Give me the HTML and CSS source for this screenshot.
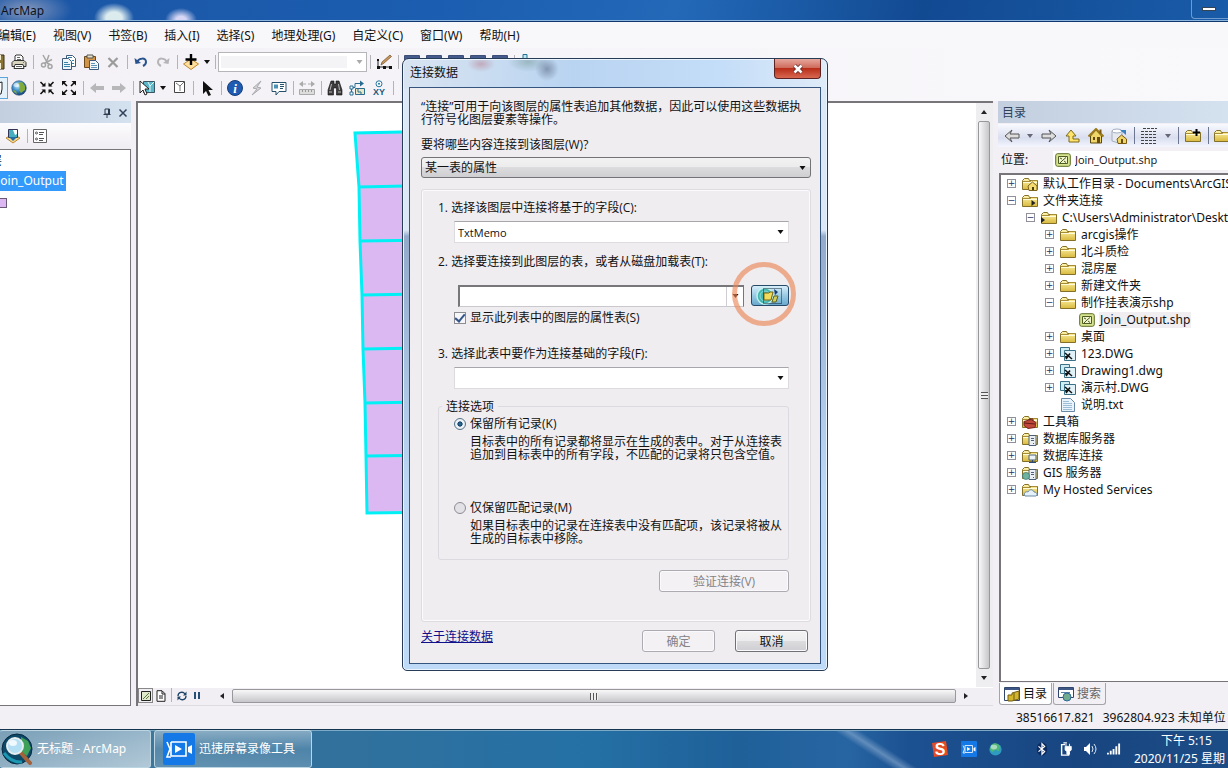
FILE: index.html
```html
<!DOCTYPE html>
<html lang="zh-CN">
<head>
<meta charset="utf-8">
<title>无标题 - ArcMap</title>
<link rel="stylesheet" href="styles.css">
</head>
<body>
<svg class="sprite" aria-hidden="true">
  <defs>
    <linearGradient id="gold" x1="0" y1="0" x2="0" y2="1"><stop offset="0" stop-color="#fff6b0"/><stop offset="1" stop-color="#d9b93c"/></linearGradient>
    <radialGradient id="sea" cx=".4" cy=".35" r=".7"><stop offset="0" stop-color="#c9ecff"/><stop offset=".5" stop-color="#3b8ac4"/><stop offset="1" stop-color="#123a6b"/></radialGradient>
  </defs>
  <symbol id="save" viewBox="0 0 16 16"><path d="M1 1h14v14H1z" fill="#8a7434" stroke="#3c3115"/><path d="M4 1h8v5H4zM4 9h8v6H4z" fill="#f3edd4"/></symbol>
  <symbol id="print" viewBox="0 0 16 16"><path d="M4 7V2l1-1h5l2 2v4" fill="#fff" stroke="#333"/><path d="M1 8.500l2-2h10l2 2v4H1z" fill="#d8d4c0" stroke="#333"/><path d="M4 10.500h8l1 4H3z" fill="#fff" stroke="#333"/><path d="M6 3.500h3M6 5.500h4M5 12.500h6" stroke="#666"/><path d="M12 8.500h1" stroke="#3a3"/></symbol>
  <symbol id="cut" viewBox="0 0 16 16"><g fill="none" stroke="#a5a5a5" stroke-width="1.500"><path d="M4 1l5 9M10 1L7 9"/><circle cx="4.500" cy="11" r="2"/><circle cx="11" cy="12.500" r="2"/><path d="M5 9.500l8-4M8 9l3 1.500"/></g></symbol>
  <symbol id="copy" viewBox="0 0 16 16"><path d="M5.500 1.500h6l3 3v8h-9z" fill="#fff" stroke="#3d5a7c"/><path d="M1.500 4.500h6l3 3v8h-9z" fill="#eef6fb" stroke="#3d5a7c"/><path d="M3 8.500h4M3 10.500h6M3 12.500h6M7 3.500h4M11 6.500h2M11 9.500h2" stroke="#3685a8"/></symbol>
  <symbol id="paste" viewBox="0 0 16 16"><path d="M1.500 2.500h11v11h-11z" fill="#d29446" stroke="#6d4a1b"/><path d="M4 1h6v3H4z" fill="#e8dfc6" stroke="#555"/><path d="M6.500 6.500h6l3 3v6h-9z" fill="#f4f8fb" stroke="#3d5a7c"/><path d="M8 9.500h4M8 11.500h6M8 13.500h6" stroke="#5d94b8"/></symbol>
  <symbol id="del" viewBox="0 0 16 16"><path d="M3.500 4l9 9M12.500 4l-9 9" stroke="#9b9b9b" stroke-width="2.200"/></symbol>
  <symbol id="undo" viewBox="0 0 16 16"><path d="M4 8c2-4 9-5 9 0 0 2-1 3-3 4" fill="none" stroke="#28538f" stroke-width="2"/><path d="M1.500 4l1 6 5.500-1z" fill="#28538f"/></symbol>
  <symbol id="redo" viewBox="0 0 16 16"><path d="M12 8c-2-4-9-5-9 0 0 2 1 3 3 4" fill="none" stroke="#b5b5b8" stroke-width="2"/><path d="M14.500 4l-1 6L8 9z" fill="#b5b5b8"/></symbol>
  <symbol id="add" viewBox="0 0 16 16"><path d="M8 5l7.500 5L8 15.500.5 10z" fill="#ffdf9b" stroke="#bd8730"/><path d="M8 0v11M2.500 5.500h11" stroke="#000" stroke-width="2.400"/></symbol>
  <symbol id="caret" viewBox="0 0 6 4"><path d="M0 0h6L3 4z" fill="currentColor"/></symbol>
  <symbol id="edit" viewBox="0 0 16 16"><path d="M2 6v7h12" stroke="#222" fill="none"/><path d="M1 5h2v2H1zM1 12h3v3H1zM7 12h3v3H7zM13 12h3v3h-3z" fill="#111"/><path d="M5 11l1-3 8-7 1.500 1.500-8 7z" fill="#c9975c" stroke="#6e4c25" stroke-width=".7"/></symbol>
  <symbol id="win" viewBox="0 0 16 16"><path d="M.5 1.500h15v13H.5z" fill="#eff5fa" stroke="#3d4e78"/><path d="M1 2h14v3H1z" fill="#465b8d"/></symbol>
  <symbol id="model" viewBox="0 0 16 16"><path d="M3 .5h4V6H3z" fill="#bfe6f2" stroke="#247391"/></symbol>
  <symbol id="hand" viewBox="0 0 16 16"><path d="M9 3l4-1v7l-1 5H5L2 8" fill="#fff" stroke="#222"/></symbol>
  <symbol id="globe" viewBox="0 0 16 16"><circle cx="8" cy="8" r="7.300" fill="url(#sea)" stroke="#37577e" stroke-width=".6"/><path d="M7 3l4-1 3 4v4l-4 3-2-3 1-3zM2 10l3 1 1 3-3-2z" fill="#82ab3d"/><ellipse cx="5.500" cy="5" rx="3" ry="2" fill="#fff" opacity=".55"/></symbol>
  <symbol id="earth" viewBox="0 0 16 16"><circle cx="8" cy="8" r="7.500" fill="#2f9bc0"/><path d="M3 2q6-4 11 2l-2 6-4-2-4 3-3-3z" fill="#4fb878"/><ellipse cx="6" cy="5" rx="4" ry="3" fill="#fff" opacity=".5"/></symbol>
  <symbol id="zin" viewBox="0 0 16 16"><path d="M1.500 2l4 4M14.500 2l-4 4M1.500 14l4-4M14.500 14l-4-4" stroke="#111" stroke-width="1.600"/><path d="M6.500 2.500v4h-4zM9.500 2.500v4h4zM6.500 13.500v-4h-4zM9.500 13.500v-4h4z" fill="#111"/></symbol>
  <symbol id="zout" viewBox="0 0 16 16"><path d="M2 2l4 4M14 2l-4 4M2 14l4-4M14 14l-4-4" stroke="#111" stroke-width="1.600"/><path d="M1 1h4.500L1 5.500zM15 1h-4.500L15 5.500zM1 15h4.500L1 10.500zM15 15h-4.500l4.500-4.500z" fill="#111"/></symbol>
  <symbol id="left" viewBox="0 0 16 16"><path d="M1 8l6-5v3h8v4H7v3z" fill="#b7b7ba"/></symbol>
  <symbol id="right" viewBox="0 0 16 16"><path d="M15 8L9 3v3H1v4h8v3z" fill="#b7b7ba"/></symbol>
  <symbol id="select" viewBox="0 0 16 16"><path d="M4.500 1.500h11v11h-11z" fill="#59b8c9" stroke="#3b5663"/><path d="M9 2l2 4 4-4M11 6v6" stroke="#e5f8fa" fill="none"/><path d="M1 1v12l3-3 2 5 2-1-2-5h4z" fill="#fff" stroke="#222"/></symbol>
  <symbol id="desel" viewBox="0 0 16 16"><path d="M3.500 1.500h10v11h-10z" fill="#fff" stroke="#444"/><path d="M5 3l4 3 4-4M9 6v5" stroke="#777" fill="none"/></symbol>
  <symbol id="pointer" viewBox="0 0 16 16"><path d="M4 1v13l3-3 2.500 5 2.500-1-2.500-5H14z" fill="#111"/></symbol>
  <symbol id="bolt" viewBox="0 0 16 16"><path d="M12 1L4 8l4 1-5 6 9-7-4-1z" fill="#d4d4d6" stroke="#a9a9ac"/></symbol>
  <symbol id="popup" viewBox="0 0 16 16"><path d="M1 2.500h14v9H8L5 15v-3.500H1z" fill="#fff" stroke="#24516c"/><path d="M3 4.500h4v4H3z" fill="#4b91b8"/><path d="M9 4.500h4M9 6.500h4M9 8.500h3" stroke="#24516c"/></symbol>
  <symbol id="measure" viewBox="0 0 16 16"><path d="M2 4h12" stroke="#aaa" stroke-dasharray="5 2"/><path d="M4 1v6L0 4zM12 1v6l4-3z" fill="#aaa"/><path d="M.5 9.500h15v5H.5z" fill="#ddd" stroke="#aaa"/><path d="M3.500 10v2M6.500 10v2M9.500 10v2M12.500 10v2" stroke="#999"/></symbol>
  <symbol id="find" viewBox="0 0 16 16"><path d="M4 1h3v3h2V1h3l3 9v5H9.500V8h-3v7H1v-5z" fill="#3d3b3b" stroke="#111" stroke-width=".6"/><path d="M4.500 4L3 10M11.500 4l1 6M2 12h3M11 12h3" stroke="#bbb"/></symbol>
  <symbol id="route" viewBox="0 0 16 16"><path d="M2.500 13V7.500H6V3.500h6" stroke="#286d91" fill="none"/><path d="M11 .5l4 3-4 3z" fill="#286d91"/><path d="M1 6h3v3H1zM1 12h3v3H1z" fill="#fff" stroke="#286d91"/><path d="M6.500 8.500h9v6h-9z" fill="#e8e6c4" stroke="#286d91"/><path d="M9 9v3h3v2" stroke="#286d91" fill="none"/></symbol>
  <symbol id="pin" viewBox="0 0 10 10"><path d="M3 1h4.500v5H3zM1.500 6.500h7M5 7v3M6.500 1v5" stroke="#2b3a4f" fill="none"/></symbol>
  <symbol id="x" viewBox="0 0 10 10"><path d="M1.500 1.500l7 7M8.500 1.500l-7 7" stroke="currentColor" stroke-width="1.500"/></symbol>
  <symbol id="bigx" viewBox="0 0 12 10"><path d="M2.500 1.500l7 7M9.500 1.500l-7 7" stroke="#5a2020" stroke-width="4"/><path d="M2.500 1.500l7 7M9.500 1.500l-7 7" stroke="#fff" stroke-width="2.600"/></symbol>
  <symbol id="source" viewBox="0 0 16 16"><path d="M1 10l7-4 7 4-7 5z" fill="#f9d98b" stroke="#bd8730"/><path d="M3.500 1.500h9v8h-9z" fill="#46aebd" stroke="#335"/><path d="M8 2h4v4l-2 1z" fill="#fff"/><path d="M8 13L4 9h8z" fill="#246ea5"/></symbol>
  <symbol id="listopt" viewBox="0 0 14 14"><path d="M.5.5h13v13H.5z" fill="#fff" stroke="#666"/><g fill="none" stroke="#555"><circle cx="3.500" cy="4" r="1"/><circle cx="3.500" cy="10" r="1"/><path d="M6 3.500h5M6 5.500h4M6 9.500h5M6 11.500h4"/></g></symbol>
  <symbol id="nav-l" viewBox="0 0 16 16"><path d="M1 8l7-6-2 4h9v4H6l2 4z" fill="#ddd" stroke="#555"/></symbol>
  <symbol id="nav-r" viewBox="0 0 16 16"><path d="M15 8L8 2l2 4H1v4h9l-2 4z" fill="#ddd" stroke="#555"/></symbol>
  <symbol id="up" viewBox="0 0 16 16"><path d="M6 2l5 6H8v3h6v3H4V8H1z" fill="#ffe36a" stroke="#7b681d"/></symbol>
  <symbol id="home" viewBox="0 0 16 16"><path d="M2.500 8v7h11V8L8 2z" fill="#f0d567" stroke="#5b4912"/><path d="M.5 8.500L8 1l7.500 7.500" fill="none" stroke="#9c7b1c" stroke-width="2"/><path d="M5 9h2v3H5zM9 9h3v6H9z" fill="#664b16"/><path d="M11.500 1.500h2v4h-2z" fill="#7b5b12"/></symbol>
  <symbol id="dbhome" viewBox="0 0 16 16"><path d="M1 3v10q5 3 10 0V3z" fill="#e6e9ee" stroke="#a3afc0"/><ellipse cx="6" cy="3" rx="5" ry="2" fill="#fff" stroke="#a3afc0"/><path d="M9 2h6v5z" fill="#3b82c0"/><path d="M6 11l4.500-4 5 4v4.500H7z" fill="#f0d567" stroke="#7b5b12"/><path d="M10 11h2v4h-2z" fill="#664b16"/></symbol>
  <symbol id="grid" viewBox="0 0 16 16"><path d="M2 .5h14M0 3.500h16M0 6.500h16M0 9.500h16M0 12.500h16M0 15.500h16" stroke="#444" stroke-dasharray="3 1"/></symbol>
  <symbol id="folder" viewBox="0 0 16 14"><path d="M.5 12.500v-9l2-2h4l1 2h8v9z" fill="url(#gold)" stroke="#85702a"/><path d="M1 5.500h14" stroke="#fffbd9"/><path d="M.5 4.500h8l1-1h6" stroke="#a68d35" fill="none"/></symbol>
  <symbol id="f-home" viewBox="0 0 16 14"><use href="#folder"/><path d="M6 9l4.500-4L15 9v4.500H7z" fill="#f5dc72" stroke="#7a6420"/><path d="M10 10h2v3h-2z" fill="#513f0b"/></symbol>
  <symbol id="f-go" viewBox="0 0 16 14"><use href="#folder"/><path d="M9.500 6l4 3-4 3z" fill="#222"/></symbol>
  <symbol id="f-in" viewBox="0 0 16 14"><use href="#folder"/><path d="M0 6l4 3-4 3z" fill="#222"/></symbol>
  <symbol id="f-plus" viewBox="0 0 16 14"><use href="#folder"/><path d="M11.500 0v7M8 3.500h7" stroke="#000" stroke-width="2"/></symbol>
  <symbol id="f-tool" viewBox="0 0 16 14"><use href="#folder"/><path d="M2 6.500l7-2 5 3-1 5-7 1-4-3z" fill="#c0473a" stroke="#7c261e"/><path d="M7 5V4h4v2M2 8l11 1" stroke="#641d17" fill="none"/></symbol>
  <symbol id="f-db" viewBox="0 0 16 14"><use href="#folder"/><path d="M7 3.500h7v10H7z" fill="#e9eff4" stroke="#4c6176"/><path d="M9 6.500h3M9 8.500h3M11 11.500h1" stroke="#4c6176"/></symbol>
  <symbol id="f-conn" viewBox="0 0 16 14"><use href="#folder"/><path d="M7 6h7v5H7z" fill="#ecf4fa" stroke="#4c6176"/><path d="M10.500 11v2M7 13.500h7" stroke="#2d4c72"/></symbol>
  <symbol id="f-gis" viewBox="0 0 16 14"><use href="#f-db"/><circle cx="4" cy="10" r="3.500" fill="#6fb39d" stroke="#3e7480" stroke-width=".7"/></symbol>
  <symbol id="f-cloud" viewBox="0 0 16 14"><use href="#folder"/><path d="M3 13c-2-3 1-5 3-4 1-3 5-3 6 0 3 0 4 3 2 4z" fill="#e6f2fb" stroke="#6b8ba5"/></symbol>
  <symbol id="shp" viewBox="0 0 16 14"><rect x=".7" y=".7" width="14.600" height="12.600" rx="2" fill="#d7e38f" stroke="#5a6d25"/><path d="M3.500 3.500h9v7h-9z" fill="#eff4cd" stroke="#4c5c22"/><path d="M5 5l2 1M11 4.500L8 7l-3 3M9 8l2 1.500" stroke="#4c5c22" fill="none"/></symbol>
  <symbol id="dwg" viewBox="0 0 16 14"><path d="M.5.500h9v9h-9z" fill="#d0ecf3" stroke="#3a7186"/><path d="M4.500 3.500h11v10h-11z" fill="#e0f2f7" stroke="#3a7186"/><path d="M5 6l7 6M10 6.500L6 12M5 10l4-1" stroke="#111" stroke-width="1.500"/></symbol>
  <symbol id="txt" viewBox="0 0 16 14"><path d="M1.500.5h9l4 4v9h-13z" fill="#e9f3fb" stroke="#6789a5"/><path d="M3 3.500h6M3 5.500h9M3 7.500h9M3 9.500h9M3 11.500h9" stroke="#9dbdd6"/></symbol>
  <symbol id="tab-cat" viewBox="0 0 16 16"><path d="M.5 1.500h15v13H.5z" fill="#fff" stroke="#31466d"/><path d="M1 2h14v2H1z" fill="#3e5685"/><path d="M4 9h4V7l7-2v8l-7 2H4z" fill="#d4b62c" stroke="#715e13"/><path d="M10 7v7" stroke="#715e13"/></symbol>
  <symbol id="tab-find" viewBox="0 0 16 16"><path d="M.5 1.500h15v10H.5z" fill="#fff" stroke="#31466d"/><path d="M1 2h14v2H1z" fill="#3e5685"/><path d="M3 6.500h9" stroke="#5981a8"/><circle cx="9" cy="11" r="4" fill="#6fab8f" stroke="#31699a"/></symbol>
  <symbol id="page" viewBox="0 0 10 12"><path d="M1 .7h5l3 3v7.600H1zM6 1v3h3M3 6h4M3 8h4" fill="#fff" stroke="#222"/></symbol>
  <symbol id="dataview" viewBox="0 0 10 10"><path d="M.5.500h9v9h-9z" fill="#dfe9cc" stroke="#222"/><path d="M2 8l6-6M5 8l3-3" stroke="#5b7a42"/></symbol>
  <symbol id="refresh" viewBox="0 0 10 10"><path d="M1 5c0-4 5-5 7-2M9 5c0 4-5 5-7 2" fill="none" stroke="#1c4468" stroke-width="1.300"/><path d="M9.500.5v4H6zM.5 9.500v-4H4z" fill="#1c4468"/></symbol>
  <symbol id="arcmap" viewBox="0 0 32 32"><circle cx="16" cy="16" r="15" fill="#0c4868" stroke="#07283f"/><path d="M20 4l7 4 3 7-4 8-6-4z" fill="#3fa05a"/><path d="M3 20q8 10 18 9" stroke="#1c98b3" stroke-width="3" fill="none"/><path d="M19 19l10 11" stroke="#a2623a" stroke-width="4" stroke-linecap="round"/><circle cx="14" cy="13" r="8" fill="#b3dff4" stroke="#e7edf0" stroke-width="2"/><ellipse cx="12" cy="10" rx="4" ry="3" fill="#fff" opacity=".8"/></symbol>
  <symbol id="recorder" viewBox="0 0 32 32"><rect width="32" height="32" rx="2" fill="#1479e6"/><path d="M8 9h15v14H8M4 9l3 7-3 8h4M8 9v14" fill="none" stroke="#fff" stroke-width="1.600"/><path d="M12 12l7 4-7 4z" fill="#fff"/><path d="M25 14l4-2v9l-4-2z" fill="#fff"/></symbol>
  <symbol id="bt" viewBox="0 0 14 16"><ellipse cx="7" cy="8" rx="6" ry="7.500" fill="#0c2b60"/><path d="M3 5l7 6-3 3V2l3 3-7 6" stroke="#fff" fill="none" stroke-width="1.400"/></symbol>
  <symbol id="power" viewBox="0 0 14 16"><path d="M6 3H2v12h8v-3M4 1h4" fill="none" stroke="#fff" stroke-width="1.600"/><path d="M6 5h7v4l-2 2v3H8v-3L6 9zM7 2v3M11 2v3" fill="#fff" stroke="#fff"/></symbol>
  <symbol id="sound" viewBox="0 0 14 14"><path d="M1 5h2l4-4v12L3 9H1z" fill="#fff"/><path d="M9 4q2 3 0 6M11 2q4 5 0 10" stroke="#dce8f4" fill="none"/></symbol>
  <symbol id="signal" viewBox="0 0 15 12"><path d="M0 10h2v2H0zM3 8h2v4H3zM6 6h2v6H6zM9 3h2v9H9zM12 0h2v12h-2z" fill="#fff"/></symbol>
  <symbol id="browse" viewBox="0 0 28 18"><circle cx="9" cy="9" r="8" fill="#45b5b1" stroke="#bff2ec" stroke-width="1.500"/><circle cx="9" cy="9" r="5" fill="none" stroke="#8fdcd2"/><path d="M8 6h5l1-1h3l-2 8H8z" fill="#f2dc5b" stroke="#766314"/><path d="M18 9h4l-2 6h-4z" fill="#d5cd5b" stroke="#5b6320"/><path d="M18 2l4 3-3 3z" fill="#153d6d"/><path d="M7.500 1.500h18v15h-18z" fill="none" stroke="#123" stroke-dasharray="1 1"/></symbol>
</svg>

<header class="titlebar"><h1>ArcMap</h1><button class="minimize" aria-label="最小化"><span></span></button></header>
<nav class="menubar">
  <button>编辑(E)</button><button>视图(V)</button><button>书签(B)</button><button>插入(I)</button><button>选择(S)</button><button>地理处理(G)</button><button>自定义(C)</button><button>窗口(W)</button><button>帮助(H)</button>
</nav>
<div class="toolbar">
  <button aria-label="保存"><svg><use href="#save"/></svg></button><button aria-label="打印"><svg><use href="#print"/></svg></button><i></i>
  <button aria-label="剪切"><svg><use href="#cut"/></svg></button><button aria-label="复制"><svg><use href="#copy"/></svg></button><button aria-label="粘贴"><svg><use href="#paste"/></svg></button><button aria-label="删除"><svg><use href="#del"/></svg></button><i></i>
  <button aria-label="撤消"><svg><use href="#undo"/></svg></button><button aria-label="恢复"><svg><use href="#redo"/></svg></button><i></i>
  <button aria-label="添加数据"><svg><use href="#add"/></svg></button><button class="drop" aria-label="更多数据"><svg><use href="#caret"/></svg></button><i></i>
  <span class="scale"><select aria-label="比例尺" disabled><option></option></select><svg><use href="#caret"/></svg></span><i></i>
  <button aria-label="编辑器"><svg><use href="#edit"/></svg></button><i></i>
  <button aria-label="内容列表"><svg><use href="#win"/></svg></button><button aria-label="目录"><svg><use href="#win"/></svg></button><button aria-label="搜索"><svg><use href="#win"/></svg></button><button aria-label="工具箱"><svg><use href="#win"/></svg></button><button aria-label="Python"><svg><use href="#win"/></svg></button><i></i><button aria-label="模型"><svg><use href="#model"/></svg></button>
</div>
<div class="toolbar">
  <button class="active" aria-label="平移"><svg><use href="#hand"/></svg></button><button aria-label="全图"><svg><use href="#globe"/></svg></button><i></i>
  <button aria-label="固定放大"><svg><use href="#zin"/></svg></button><button aria-label="固定缩小"><svg><use href="#zout"/></svg></button><i></i>
  <button aria-label="后退"><svg><use href="#left"/></svg></button><button aria-label="前进"><svg><use href="#right"/></svg></button><i></i>
  <button aria-label="选择要素"><svg><use href="#select"/></svg></button><button class="drop" aria-label="选择方式"><svg><use href="#caret"/></svg></button><button aria-label="清除选择"><svg><use href="#desel"/></svg></button><i></i>
  <button aria-label="选择元素"><svg><use href="#pointer"/></svg></button><i></i>
  <button aria-label="识别"><svg viewBox="0 0 16 16"><circle cx="8" cy="8" r="7.500" fill="#1e5cb3" stroke="#173d79"/><text x="8" y="13" text-anchor="middle" class="svg-info">i</text></svg></button><button aria-label="超链接"><svg><use href="#bolt"/></svg></button><button aria-label="弹出窗口"><svg><use href="#popup"/></svg></button><i></i>
  <button aria-label="测量"><svg><use href="#measure"/></svg></button><i></i>
  <button aria-label="查找"><svg><use href="#find"/></svg></button><button aria-label="查找路径"><svg><use href="#route"/></svg></button><button aria-label="转到 XY"><svg viewBox="0 0 16 16"><circle cx="8" cy="3.800" r="3" fill="#fff" stroke="#24759e"/><circle cx="8" cy="3.800" r="1" fill="#24759e"/><text x="8" y="15" text-anchor="middle" class="svg-xy">XY</text></svg></button><i></i><button aria-label="查看器"><svg><use href="#desel"/></svg></button>
</div>

<main class="workspace">
  <aside class="contents">
    <div class="panel-head end"><button aria-label="固定"><svg><use href="#pin"/></svg></button><button aria-label="关闭"><svg><use href="#x"/></svg></button></div>
    <div class="contents-tools"><button aria-label="按源列出"><svg><use href="#source"/></svg></button><i></i><button aria-label="选项"><svg class="small"><use href="#listopt"/></svg></button></div>
    <div class="layers"><p><span>图层</span></p><p><span class="picked">Join_Output</span></p><p><span class="swatch"></span></p></div>
  </aside>
  <section class="mapframe">
    <div class="maprow">
      <div class="map"><svg viewBox="0 0 460 420" width="460" height="420"><path d="M218 30L221 84 222 138 224 192 225 246 227 300 228 353 229 410 460 407V25z" fill="#dcb8f2"/><path d="M460 25L217 30 221 84 222 138 224 192 225 246 227 300 228 353 229 410 460 407M221 84l239-5M222 138l238-3M224 192l236-4M225 246l235-4M227 300l233-4M228 353l232-3" fill="none" stroke="#00f0f5" stroke-width="3"/></svg></div>
      <div class="vscroll"><button aria-label="向上"><span class="tri up"></span></button><div class="thumb"><span></span></div><button aria-label="向下"><span class="tri down"></span></button></div>
    </div>
    <div class="mapfoot">
      <button class="on" aria-label="数据视图"><svg><use href="#dataview"/></svg></button><button aria-label="布局视图"><svg><use href="#page"/></svg></button><i></i><button aria-label="刷新"><svg><use href="#refresh"/></svg></button><button aria-label="暂停"><span class="pause"></span></button>
      <div class="hscroll"><button aria-label="向左"><span class="tri lt"></span></button><div class="thumb"><span></span></div><button aria-label="向右"><span class="tri rt"></span></button></div>
    </div>
  </section>
  <aside class="catalog">
    <div class="panel-head"><h2>目录</h2></div>
    <div class="cat-tools">
      <button aria-label="后退"><svg><use href="#nav-l"/></svg></button><button class="drop" aria-label="历史"><svg><use href="#caret"/></svg></button><button class="wide" aria-label="前进"><svg><use href="#nav-r"/></svg></button><button class="wide" aria-label="向上一级"><svg><use href="#up"/></svg></button><button aria-label="主目录"><svg><use href="#home"/></svg></button><button class="wide" aria-label="默认地理数据库"><svg><use href="#dbhome"/></svg></button><i></i><button class="wide" aria-label="视图"><svg><use href="#grid"/></svg></button><button class="drop" aria-label="视图选项"><svg><use href="#caret"/></svg></button><i></i><button class="wide" aria-label="连接文件夹"><svg><use href="#f-plus"/></svg></button><i></i><button aria-label="树"><svg><use href="#folder"/></svg></button>
    </div>
    <div class="location"><label for="loc">位置:</label><div><svg><use href="#shp"/></svg><input id="loc" value="Join_Output.shp"></div></div>
    <ul class="tree">
      <li><button>+</button><svg><use href="#f-home"/></svg><span>默认工作目录 - Documents\ArcGIS</span></li>
      <li><button>−</button><svg><use href="#f-go"/></svg><span>文件夹连接</span></li>
      <li class="l1"><button>−</button><svg><use href="#f-in"/></svg><span>C:\Users\Administrator\Desktop</span></li>
      <li class="l2"><button>+</button><svg><use href="#folder"/></svg><span>arcgis操作</span></li>
      <li class="l2"><button>+</button><svg><use href="#folder"/></svg><span>北斗质检</span></li>
      <li class="l2"><button>+</button><svg><use href="#folder"/></svg><span>混房屋</span></li>
      <li class="l2"><button>+</button><svg><use href="#folder"/></svg><span>新建文件夹</span></li>
      <li class="l2"><button>−</button><svg><use href="#folder"/></svg><span>制作挂表演示shp</span></li>
      <li class="l3"><svg><use href="#shp"/></svg><span class="current">Join_Output.shp</span></li>
      <li class="l2"><button>+</button><svg><use href="#folder"/></svg><span>桌面</span></li>
      <li class="l2"><button>+</button><svg><use href="#dwg"/></svg><span>123.DWG</span></li>
      <li class="l2"><button>+</button><svg><use href="#dwg"/></svg><span>Drawing1.dwg</span></li>
      <li class="l2"><button>+</button><svg><use href="#dwg"/></svg><span>演示村.DWG</span></li>
      <li class="l2 leaf"><svg><use href="#txt"/></svg><span>说明.txt</span></li>
      <li><button>+</button><svg><use href="#f-tool"/></svg><span>工具箱</span></li>
      <li><button>+</button><svg><use href="#f-db"/></svg><span>数据库服务器</span></li>
      <li><button>+</button><svg><use href="#f-conn"/></svg><span>数据库连接</span></li>
      <li><button>+</button><svg><use href="#f-gis"/></svg><span>GIS 服务器</span></li>
      <li><button>+</button><svg><use href="#f-cloud"/></svg><span>My Hosted Services</span></li>
    </ul>
    <div class="tabs"><button class="sel"><svg><use href="#tab-cat"/></svg>目录</button><button><svg><use href="#tab-find"/></svg>搜索</button></div>
  </aside>
</main>
<footer class="status"><p><span>38516617.821</span><span>3962804.923 未知单位</span></p></footer>
<div class="taskbar">
  <button class="task first"><svg><use href="#arcmap"/></svg>无标题 - ArcMap</button>
  <button class="task second"><svg><use href="#recorder"/></svg>迅捷屏幕录像工具</button>
  <div class="tray">
    <svg class="t18" viewBox="0 0 18 18"><path d="M1 3l14-2 2 14-14 2z" fill="#e54b25"/><text x="9" y="15" text-anchor="middle" class="svg-s">S</text></svg><svg class="t16"><use href="#recorder"/></svg><svg class="t12"><use href="#earth"/></svg>
    <svg class="t14 gap"><use href="#bt"/></svg><svg class="t14"><use href="#power"/></svg><svg class="t14"><use href="#sound"/></svg><svg class="t14"><use href="#signal"/></svg>
  </div>
  <time class="clock"><span>下午 5:15</span><span>2020/11/25 星期</span></time>
</div>

<section class="dialog" role="dialog" aria-labelledby="dlg">
  <header><h2 id="dlg">连接数据</h2><button class="close" aria-label="关闭"><svg><use href="#bigx"/></svg></button></header>
  <form class="client">
    <p class="intro">“连接”可用于向该图层的属性表追加其他数据，因此可以使用这些数据执行符号化图层要素等操作。</p>
    <label class="kind-label" for="kind">要将哪些内容连接到该图层(W)?</label>
    <span class="combo gray"><select id="kind"><option>某一表的属性</option></select><svg><use href="#caret"/></svg></span>
    <div class="group">
      <label for="f1">1. 选择该图层中连接将基于的字段(C):</label>
      <span class="combo"><select id="f1"><option>TxtMemo</option></select><svg><use href="#caret"/></svg></span>
      <label class="l-two" for="f2">2. 选择要连接到此图层的表，或者从磁盘加载表(T):</label>
      <div class="pick"><span class="combo sunk"><select id="f2"><option></option></select><svg><use href="#caret"/></svg></span><button type="button" class="browse" aria-label="浏览"><svg><use href="#browse"/></svg><span class="ring"></span></button></div>
      <div class="opt check"><input type="checkbox" id="show" checked><label for="show">显示此列表中的图层的属性表(S)</label></div>
      <label class="l-three" for="f3">3. 选择此表中要作为连接基础的字段(F):</label>
      <span class="combo"><select id="f3"><option></option></select><svg><use href="#caret"/></svg></span>
      <fieldset>
        <legend>连接选项</legend>
        <div class="opt"><input type="radio" name="keep" id="all" checked><label for="all">保留所有记录(K)</label></div>
        <p>目标表中的所有记录都将显示在生成的表中。对于从连接表追加到目标表中的所有字段，不匹配的记录将只包含空值。</p>
        <div class="opt later"><input type="radio" name="keep" id="match"><label for="match">仅保留匹配记录(M)</label></div>
        <p>如果目标表中的记录在连接表中没有匹配项，该记录将被从生成的目标表中移除。</p>
      </fieldset>
      <button type="button" class="btn verify" disabled>验证连接(V)</button>
    </div>
    <div class="actions"><a href="#about">关于连接数据</a><button type="button" class="btn" disabled>确定</button><button type="button" class="btn">取消</button></div>
  </form>
</section>
</body>
</html>
```
FILE: styles.css
```css
* { box-sizing: border-box; }
body { margin: 0; height: 100vh; min-height: 700px; display: flex; flex-direction: column; overflow: hidden; position: relative; background: #f2f0f4; color: #111; font: 12px/16px "Noto Sans", "Noto Sans CJK SC", sans-serif; }
button, input, select { font: inherit; color: inherit; }
button { border: 0; padding: 0; background: none; display: flex; align-items: center; justify-content: center; }
h1, h2, p, ul { margin: 0; padding: 0; font-size: 12px; font-weight: 400; }
svg { flex: none; width: 16px; height: 16px; }
.sprite { position: absolute; width: 0; height: 0; }
.svg-info { font: bold italic 13px "Liberation Serif", serif; fill: #fff; }
.svg-xy { font: bold 9px "Liberation Sans", sans-serif; fill: #1b5a80; }
.svg-s { font: bold 16px "Liberation Sans", sans-serif; fill: #fff; }

.titlebar { flex: none; height: 22px; display: flex; justify-content: space-between; border-bottom: 1px solid #10386f; box-shadow: inset 0 -1px #8db6df; background: radial-gradient(ellipse 20px 15px at 114px 18px, #dcebee 40%, transparent), radial-gradient(ellipse 16px 12px at 181px 20px, #d7d7f5 30%, transparent), radial-gradient(ellipse 46px 20px at 26px 10px, #8497bd, transparent), linear-gradient(100deg, #1c56a5, #1b5db0 35%, #2369b8 55%, #124a92 75%, #195ba8); }
.titlebar h1 { padding: 3px 1px; color: #0a1220; }
.minimize { width: 40px; height: 19px; margin-right: -3px; border: 1px solid #6d9bd0; border-top: 0; border-radius: 0 0 0 4px; justify-content: flex-start; padding-left: 10px; }
.minimize span { width: 12px; height: 4px; background: #fff; border: 1px solid #345; box-sizing: content-box; height: 2px; }
.menubar { flex: none; height: 26px; padding-top: 1px; display: flex; gap: 17px; align-items: center; margin-left: -2px; background: #f8f7fa; }
.menubar button { white-space: nowrap; }
.toolbar { flex: none; height: 27px; display: flex; align-items: center; background: linear-gradient(90deg, #f3f1f5, #f9f8fb); }
.toolbar > :first-child { margin-left: -14px; }
.toolbar + .toolbar { height: 26px; }
.toolbar button { flex: none; width: 22px; height: 22px; }
.toolbar .active { border: 1px solid #58a6da; background: #e4f1fa; }
.toolbar .drop { width: 10px; }
.drop svg { width: 6px; height: 4px; }
i { flex: none; width: 6px; height: 14px; background: linear-gradient(#b4b3b8, #b4b3b8) center / 1px 100% no-repeat; }
.scale { flex: none; width: 149px; height: 20px; display: flex; align-items: center; border: 1px solid #b6b6ba; background: #fff; padding: 2px; }
.scale select { appearance: none; border: 0; width: 126px; height: 12px; background: #f0eef1; }
.scale svg { width: 7px; height: 4px; margin-left: 9px; color: #aaa; }

.workspace { flex: 1; min-height: 0; display: flex; gap: 5px; }
.contents { flex: none; width: 131px; display: flex; flex-direction: column; }
.panel-head { flex: none; height: 22px; display: flex; align-items: center; padding: 1px 4px 0; background: linear-gradient(90deg, #c3cfdf, #d4e1ef); color: #30405a; }
.end { justify-content: flex-end; gap: 6px; padding-right: 3px; }
.end svg { width: 10px; height: 10px; }
.contents-tools { flex: none; height: 26px; display: flex; align-items: center; gap: 3px; padding-left: 5px; background: linear-gradient(#fcfbfd, #efedf1); }
.contents-tools .small { width: 14px; height: 14px; }
.layers { flex: 1; border: 1px solid #77757a; border-left: 0; background: #fff; padding-top: 1px; overflow: hidden; white-space: nowrap; }
.layers p { height: 20px; line-height: 20px; }
.layers p:first-child { margin-left: -22px; }
.layers p:nth-child(2) { margin-left: -6px; }
.picked { display: inline-block; padding: 0 2px 0 3px; background: #3399fa; color: #fff; }
.swatch { display: block; width: 7px; height: 10px; margin-top: 7px; }
.layers .swatch { background: #dcb8f2; border: 1px solid #6c5976; border-left: 0; }

.mapframe { flex: 1; min-width: 0; display: flex; flex-direction: column; border-left: 2px solid #77757a; border-top: 2px solid #77757a; }
.maprow { flex: 1; min-height: 0; display: flex; }
.map { flex: 1; overflow: hidden; background: #fff; }
.map svg { width: 460px; height: 420px; display: block; }
.vscroll { width: 17px; padding-right: 1px; display: flex; flex-direction: column; background: #eeedf0; }
.vscroll button { height: 18px; width: 16px; }
.thumb { flex: 1; display: flex; align-items: center; justify-content: center; border: 1px solid #98979c; border-radius: 2px; }
.vscroll .thumb { background: linear-gradient(90deg, #f8f8f9, #c7c7cb); margin: 0 2px; }
.vscroll .thumb span { width: 7px; height: 7px; background: repeating-linear-gradient(#555 0 1px, #eee 1px 3px); }
.tri { width: 0; height: 0; border: 3px solid transparent; }
.tri.up { border-top: 0; border-bottom: 4px solid #222; }
.tri.down { border-bottom: 0; border-top: 4px solid #222; }
.tri.lt { border-left: 0; border-right: 4px solid #222; }
.tri.rt { border-right: 0; border-left: 4px solid #222; }
.mapfoot { flex: none; height: 19px; display: flex; align-items: flex-start; border-bottom: 1px solid #dddce0; border-top: 1px solid #fff; padding-right: 17px; background: #f1eff3; }
.mapfoot > button { width: 15px; height: 15px; }
.mapfoot > button:not(.on) svg { height: 12px; width: 10px; }
.mapfoot svg { width: 10px; height: 10px; }
.mapfoot .on { border: 1px solid #888; }
.mapfoot .pause { width: 6px; height: 7px; border: solid #245077; border-width: 0 2px; }
.hscroll { flex: 1; height: 16px; display: flex; margin-left: 8px; }
.hscroll button { width: 20px; }
.hscroll .thumb { background: linear-gradient(#f8f8f9, #c7c7cb); margin: 1px 0; }
.hscroll .thumb span { width: 8px; height: 7px; background: repeating-linear-gradient(90deg, #555 0 1px, #eee 1px 3px); }

.catalog { flex: none; width: 230px; display: flex; flex-direction: column; }
.cat-tools { flex: none; height: 23px; margin-top: 1px; display: flex; align-items: center; padding-left: 3px; background: linear-gradient(#f9faff, #d9deef 60%, #f4f6ff); overflow: hidden; }
.cat-tools button { flex: none; width: 22px; }
.cat-tools .wide { width: 24px; }
.cat-tools .drop { width: 14px; color: #667; }
.cat-tools i { height: 17px; background-image: linear-gradient(#6d7690, #6d7690); }
.location { flex: none; height: 26px; display: flex; align-items: center; padding-left: 3px; }
.location label { width: 52px; }
.location div { flex: 1; min-width: 0; display: flex; align-items: center; gap: 4px; height: 19px; padding-left: 2px; background: #fff; }
.location div svg { height: 14px; }
.location input { width: 100%; border: 0; padding: 0; background: none; font: 11px/16px "Open Sans", sans-serif; }
.tree { flex: 1; min-height: 0; list-style: none; border: 2px solid #77757a; border-width: 2px 0 1px 2px; background: #fff; margin-left: 1px; overflow: hidden; white-space: nowrap; }
.tree li { height: 17px; display: flex; align-items: center; padding-left: 6px; }
.tree button { flex: none; width: 9px; height: 9px; margin-right: 6px; border: 1px solid #918f9a; background: #fff; color: #223568; font: 9px/7px "DejaVu Sans", sans-serif; }
.tree svg { width: 16px; height: 14px; margin-right: 4px; }
.tree span { padding: 0 1px; }
.tree .l1 { padding-left: 25px; }
.tree .l2 { padding-left: 44px; }
.tree .leaf { padding-left: 59px; }
.tree .l3 { padding-left: 78px; }
.tree .current { background: #f0eef1; }
.tabs { flex: none; height: 24px; display: flex; align-items: flex-start; padding: 1px 0 0 1px; gap: 1px; }
.tabs button { height: 22px; padding: 0 4px; gap: 3px; border: 1px solid #a5a4a9; border-top: 0; border-radius: 0 0 3px 3px; color: #666; }
.tabs .sel { background: #fff; color: #111; }
.status { flex: none; height: 23px; display: flex; justify-content: flex-end; align-items: center; }
.status p { width: 212px; display: flex; gap: 8px; white-space: nowrap; }

.taskbar { flex: none; height: 39px; display: flex; align-items: stretch; border-top: 1px solid #143450; box-shadow: inset 0 1px #7ba9c6; background: linear-gradient(33deg, transparent 43%, #8aabd099 50%, transparent 57%) 810px 0 / 130px 100% no-repeat, linear-gradient(90deg, #497c9c, #32719c 26%, #2470a5 48%, #1f6099 60%, #2765a2 69%, #1c5191 74%, #184580 88%, #1c4c86); color: #fff; }
.task { justify-content: flex-start; border: 1px solid #bbd5e2; border-radius: 3px; background: linear-gradient(#ffffff66, #ffffff22 50%, #ffffff33); }
.task svg { width: 32px; height: 32px; }
.first { width: 151px; margin-right: 3px; border-left: 0; gap: 4px; padding-left: 1px; background: linear-gradient(160deg, #ffffff44, #ffffff99); }
.second { width: 158px; gap: 4px; padding-left: 8px; }
.tray { margin-left: auto; display: flex; align-items: center; gap: 10px; }
.t18 { width: 18px; height: 18px; }
.t16 { width: 16px; height: 16px; margin: 0 2px; }
.t12 { width: 13px; height: 13px; }
.t14 { width: 14px; height: 14px; }
.gap { margin-left: 23px; }
.clock { width: 94px; margin-left: 13px; padding-top: 2px; display: flex; flex-direction: column; line-height: 18px; white-space: nowrap; }
.clock span:first-child { padding-left: 27px; }

.dialog { position: absolute; left: 402px; top: 58px; width: 426px; padding: 0 6px 6px; border: 1px solid #283c58; border-radius: 7px 7px 5px 5px; font-family: "Open Sans", "Noto Sans CJK SC", sans-serif; box-shadow: inset 0 0 0 1px #e9f4ff; background: radial-gradient(ellipse 14px 8px at 78px 5px, #b1626f66, transparent), radial-gradient(ellipse 12px 12px at 144px 10px, #50607a88, transparent), radial-gradient(ellipse 20px 10px at 125px 3px, #61867d66, transparent), linear-gradient(90deg, #d9e4f1, #b9d4f1 40%, #c4ddf8 75%, #dfebf8) 0 0 / 100% 30px no-repeat, linear-gradient(#dce8f5, #dce8f5 28%, #93aacb 29%, #bcd7f3 70%, #bedaf6); }
.dialog header { height: 28px; display: flex; justify-content: space-between; }
.dialog h2 { padding: 6px 0 0 1px; }
.close { width: 47px; height: 20px; border: 1px solid #5d2222; border-top: 0; border-radius: 0 0 4px 4px; background: linear-gradient(#e6a79d, #cf6d5d 45%, #b92e19 50%, #d76850); }
.close svg { width: 12px; height: 10px; }
.client { border: 1px solid #35557e; background: #f0edf1; padding: 12px 9px 11px 11px; line-height: 13px; display: flex; flex-direction: column; }
.intro { width: 386px; }
.kind-label { margin: 12px 0 6px; }
.combo { position: relative; display: flex; height: 22px; }
.combo select { flex: 1; min-width: 0; appearance: none; border: 1px solid #dddbe0; border-top-color: #a6a6ab; background: #fff; padding: 0 3px; font-size: 11px; color: #111; }
.combo svg { position: absolute; right: 5px; top: 9px; width: 7px; height: 4px; }
.gray { height: 21px; }
.gray select { border: 1px solid #737276; border-radius: 3px; background: linear-gradient(#f3f2f3, #ececed 48%, #dcdcde 50%, #cfcfd2); font-size: 12px; }
.group { margin-top: 11px; border: 1px solid #dedce1; box-shadow: inset 0 0 0 1px #fbfafc; border-radius: 3px; padding: 11px 21px 29px 32px; display: flex; flex-direction: column; }
.group > label { margin-left: -16px; }
.group > .combo { margin-top: 7px; }
.group .l-two { margin-top: 12px; }
.pick { display: flex; gap: 7px; margin: 17px 0 0 4px; }
.pick .combo { flex: 1; }
.sunk select { border: 2px solid #77767b; border-bottom: 1px solid #c9c8cc; border-right: 1px solid #77767b; background: linear-gradient(#cfced3, #cfced3) right 16px top / 1px 100% no-repeat, #fff; }
.browse { position: relative; width: 38px; height: 21px; border: 1px solid #274a68; border-radius: 3px; background: linear-gradient(#d7eefa, #9ccbe4 48%, #69a9cd); }
.browse svg { width: 28px; height: 18px; }
.ring { position: absolute; left: 50%; top: 50%; width: 64px; height: 64px; margin: -34px 0 0 -38px; border: 5px solid #eb8553a0; border-radius: 50%; }
.opt { display: flex; align-items: center; gap: 4px; }
.check { margin-top: 4px; }
.opt input { appearance: none; margin: 0; width: 12px; height: 12px; border: 1px solid #8d8c92; background: #f6f6f8; display: grid; place-items: center; }
.opt input[type=radio] { border-radius: 50%; background: #e2e1e6; }
.opt input[type=radio]:checked { background: radial-gradient(#2a7daa 0, #153f66 32%, #f2f5f8 42%, #d9e7f0); border-color: #5b7488; }
.opt input[type=checkbox]:checked::before { content: ""; width: 4px; height: 8px; margin-top: -2px; border: solid #33558b; border-width: 0 2px 2px 0; transform: rotate(40deg); }
.group .l-three { margin-top: 23px; }
fieldset { min-width: 0; margin: 11px 0 0 -16px; padding: 4px 4px 14px 15px; border: 1px solid #dcdae0; border-radius: 3px; }
legend { padding: 0 4px; margin-left: -12px; }
fieldset p { margin: 5px 0 0 16px; width: 316px; }
fieldset .later { margin-top: 40px; }
.btn { width: 73px; height: 22px; border: 1px solid #707075; border-radius: 3px; background: linear-gradient(#f4f3f4, #ececee 48%, #dcdcdf 50%, #cfcfd3); box-shadow: inset 0 0 0 1px #faf9fb; }
.btn:disabled { color: #838287; border-color: #adabb1; background: #f3f1f4; }
.verify { width: 130px; margin: 10px 0 0 auto; }
.actions { display: flex; align-items: flex-start; margin-top: 8px; padding-right: 3px; gap: 20px; }
.actions a { color: #10108a; margin-right: auto; }
```
